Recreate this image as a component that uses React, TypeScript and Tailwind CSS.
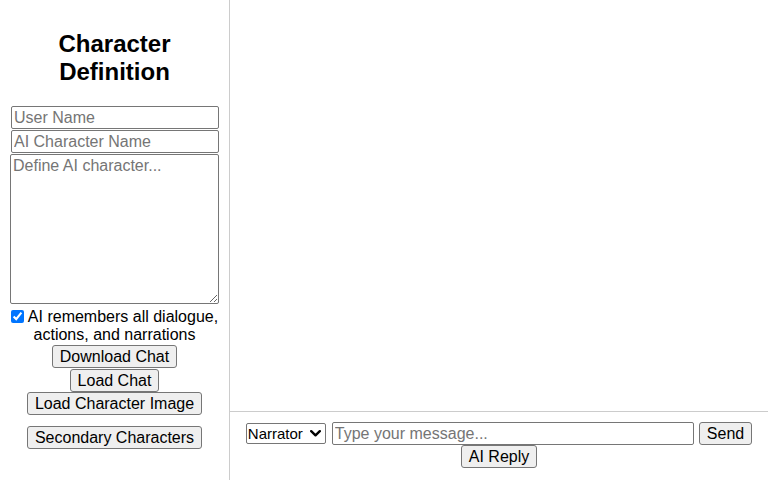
import { useState } from 'react';

const CharacterPanel = () => {
  const [remember, setRemember] = useState(true);

  return (
    <aside className="w-[230px] shrink-0 border-r border-[#cccccc] px-[10px] text-center">
      <h2 className="mt-[30px] mb-[20px] text-[24px] font-bold leading-[28px]">Character Definition</h2>

      <input
        type="text"
        placeholder="User Name"
        className="block w-[208px] h-[23px] ml-[1px] rounded-[2px] border border-[#767676] px-[2px] text-[16px] leading-[19px] placeholder:text-[#757575] outline-none"
      />
      <input
        type="text"
        placeholder="AI Character Name"
        className="block w-[208px] h-[23px] ml-[1px] mt-[1px] rounded-[2px] border border-[#767676] px-[2px] text-[16px] leading-[19px] placeholder:text-[#757575] outline-none"
      />
      <textarea
        placeholder="Define AI character..."
        className="block w-[209px] h-[150px] mt-[1px] rounded-[2px] border border-[#767676] px-[2px] py-[1px] text-[16px] leading-[19px] placeholder:text-[#757575] outline-none resize-y"
      />

      {/* Memory toggle */}
      <label className="-mx-[3px] mt-[4px] block text-[16px] leading-[18px]">
        <input
          type="checkbox"
          checked={remember}
          onChange={(e) => setRemember(e.target.checked)}
          className="mr-[4px] h-[13px] w-[13px] align-[-1px] accent-[#0075ff]"
        />
        AI remembers all dialogue, actions, and narrations
      </label>

      <div className="mt-[1px] flex flex-col items-center gap-[1px]">
        <button className="h-[23px] rounded-[3px] border border-[#767676] bg-[#efefef] px-[7px] text-[16px] leading-[19px]">
          Download Chat
        </button>
        <button className="h-[23px] rounded-[3px] border border-[#767676] bg-[#efefef] px-[7px] text-[16px] leading-[19px]">
          Load Chat
        </button>
        <button className="-mt-[1px] h-[23px] rounded-[3px] border border-[#767676] bg-[#efefef] px-[7px] text-[16px] leading-[19px]">
          Load Character Image
        </button>
        <button className="mt-[10px] h-[23px] rounded-[3px] border border-[#767676] bg-[#efefef] px-[7px] text-[16px] leading-[19px]">
          Secondary Characters
        </button>
      </div>
    </aside>
  );
};

const ChatPanel = () => {
  const [speaker, setSpeaker] = useState('Narrator');
  const [message, setMessage] = useState('');

  return (
    <main className="flex flex-1 flex-col">
      {/* Messages */}
      <div className="flex-1" />

      {/* Composer */}
      <div className="border-t border-[#cccccc] px-[10px] pt-[10px] pb-[12px]">
        <div className="flex items-center justify-center">
          <div className="relative">
            <select
              value={speaker}
              onChange={(e) => setSpeaker(e.target.value)}
              className="block h-[21px] w-[80px] appearance-none rounded-[2px] border border-[#767676] bg-white pl-[1px] pr-[18px] text-[15px] leading-[19px] text-black outline-none"
            >
              <option>Narrator</option>
            </select>
            <svg
              className="pointer-events-none absolute right-[5px] top-[7px]"
              width="11"
              height="7"
              viewBox="0 0 11 7"
              fill="none"
            >
              <path d="M1.2 1.2 5.5 5.3 9.8 1.2" stroke="#000" strokeWidth="2.4" strokeLinecap="round" strokeLinejoin="round" />
            </svg>
          </div>
          <input
            type="text"
            value={message}
            onChange={(e) => setMessage(e.target.value)}
            placeholder="Type your message..."
            className="ml-[6px] h-[23px] w-[362px] rounded-[2px] border border-[#767676] px-[2px] text-[16px] leading-[19px] placeholder:text-[#757575] outline-none"
          />
          <button className="ml-[5px] h-[23px] rounded-[3px] border border-[#767676] bg-[#efefef] px-[7px] text-[16px] leading-[19px]">
            Send
          </button>
        </div>
        <div className="flex justify-center">
          <button className="h-[23px] rounded-[3px] border border-[#767676] bg-[#efefef] px-[7px] text-[16px] leading-[19px]">
            AI Reply
          </button>
        </div>
      </div>
    </main>
  );
};

const App = () => {
  return (
    <div className="flex h-screen bg-white text-black font-['Liberation_Sans',Arial,sans-serif]">
      <CharacterPanel />
      <ChatPanel />
    </div>
  );
};

export default App;
